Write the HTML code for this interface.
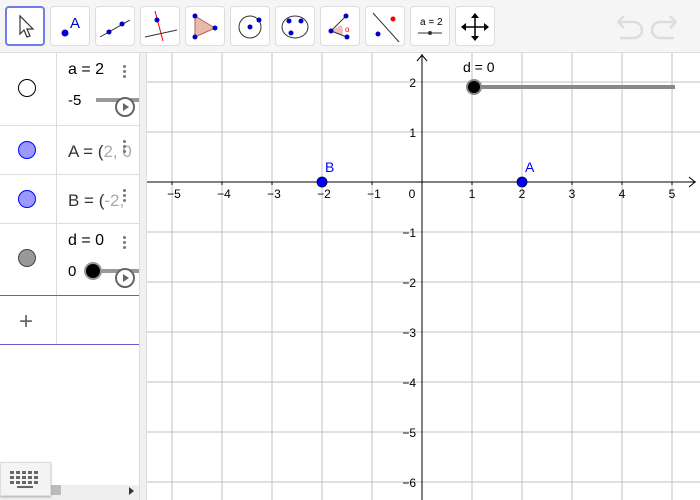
<!DOCTYPE html>
<html><head><style>
body{margin:0;width:700px;height:500px;overflow:hidden;font-family:"Liberation Sans",sans-serif;background:#fff;position:relative}
.tb{position:absolute;left:0;top:0;width:700px;height:52px;background:#f5f5f5;border-bottom:1px solid #ddd}
.btn{position:absolute;top:6px;width:38px;height:38px;border:1px solid #ddd;border-radius:4px;background:#fff}
.sel{border:2px solid #6e7cf0;width:36px;height:36px}
.alg{position:absolute;left:0;top:53px;width:139px;height:447px;background:#fff}
.div{position:absolute;left:139px;top:53px;width:8px;height:447px;background:#f0f0f0;border-left:1px solid #ddd;border-right:1px solid #ddd;box-sizing:border-box}
.row{position:absolute;left:0;width:139px;border-bottom:1px solid #ddd;box-sizing:border-box}
.row .vl{position:absolute;left:56px;top:0;bottom:0;border-left:1px solid #ddd}
.dot{position:absolute;left:18px;width:18px;height:18px;border-radius:50%;box-sizing:border-box}
.t{position:absolute;font-size:16px;color:#000;white-space:nowrap}
.menu{position:absolute;left:123px;width:3px}
.menu i{display:block;width:3px;height:3px;background:#777;border-radius:50%;margin-bottom:2px}
</style></head><body>
<div class="tb">
<div class="btn sel" style="left:5px"><svg width="36" height="36"><path d="M13 8 L13 26 L17 22 L20 29 L23 28 L20 21 L26 21 Z" fill="#fff" stroke="#333" stroke-width="1.2"/></svg></div>
<div class="btn" style="left:50px"><svg width="38" height="38"><circle cx="14" cy="26" r="3.5" fill="#00c"/><text x="19" y="21" font-size="15" fill="#00c" font-family="Liberation Sans">A</text></svg></div>
<div class="btn" style="left:95px"><svg width="38" height="38"><line x1="4" y1="30" x2="34" y2="13" stroke="#333"/><circle cx="13" cy="25" r="2.5" fill="#00c"/><circle cx="26" cy="17" r="2.5" fill="#00c"/></svg></div>
<div class="btn" style="left:140px"><svg width="38" height="38"><line x1="14" y1="4" x2="22" y2="34" stroke="#e00"/><line x1="4" y1="30" x2="36" y2="23" stroke="#333"/><circle cx="16" cy="13" r="2.5" fill="#00c"/></svg></div>
<div class="btn" style="left:185px"><svg width="38" height="38"><path d="M9 9 L29 21 L9 30 Z" fill="#e9b8a8" stroke="#a65" /><circle cx="9" cy="9" r="2.5" fill="#00c"/><circle cx="29" cy="21" r="2.5" fill="#00c"/><circle cx="9" cy="30" r="2.5" fill="#00c"/></svg></div>
<div class="btn" style="left:230px"><svg width="38" height="38"><circle cx="19" cy="20" r="11" fill="none" stroke="#333"/><circle cx="19" cy="20" r="2.5" fill="#00c"/><circle cx="28" cy="13" r="2.5" fill="#00c"/></svg></div>
<div class="btn" style="left:275px"><svg width="38" height="38"><ellipse cx="19" cy="20" rx="13" ry="11" fill="none" stroke="#333"/><circle cx="13" cy="14" r="2.5" fill="#00c"/><circle cx="25" cy="14" r="2.5" fill="#00c"/><circle cx="15" cy="26" r="2.5" fill="#00c"/></svg></div>
<div class="btn" style="left:320px"><svg width="38" height="38"><path d="M10 24 L20 18 A10 10 0 0 1 21 28 Z" fill="#f3bcbc"/><line x1="10" y1="24" x2="25" y2="9" stroke="#333"/><line x1="10" y1="24" x2="26" y2="30" stroke="#333"/><circle cx="10" cy="24" r="2.5" fill="#00c"/><circle cx="25" cy="9" r="2.5" fill="#00c"/><circle cx="26" cy="30" r="2.5" fill="#00c"/><text x="24" y="25" font-size="8" fill="#e00">o</text></svg></div>
<div class="btn" style="left:365px"><svg width="38" height="38"><line x1="7" y1="6" x2="33" y2="35" stroke="#333"/><circle cx="12" cy="27" r="2.5" fill="#00c"/><circle cx="27" cy="12" r="2.5" fill="#e00"/></svg></div>
<div class="btn" style="left:410px"><svg width="38" height="38"><text x="9" y="18" font-size="10" font-family="Liberation Sans">a = 2</text><line x1="7" y1="26" x2="31" y2="26" stroke="#333"/><circle cx="19" cy="26" r="2" fill="#333"/></svg></div>
<div class="btn" style="left:455px"><svg width="38" height="38"><path d="M19 8 V32 M7 20 H31" stroke="#000" stroke-width="1.5"/><path d="M19 6 L15 11 H23 Z M19 34 L15 29 H23 Z M5 20 L10 16 V24 Z M33 20 L28 16 V24 Z"/></svg></div>
<svg style="position:absolute;left:612px;top:12px" width="84" height="30"><path d="M6 10 H22 A8 8 0 0 1 22 26 H8 M6 10 L12 4 M6 10 L12 16" fill="none" stroke="#ddd" stroke-width="2.5"/><path d="M64 10 H48 A8 8 0 0 0 48 26 H62 M64 10 L58 4 M64 10 L58 16" fill="none" stroke="#ddd" stroke-width="2.5"/></svg>
</div>

<div class="alg">
<div class="row" style="top:0;height:73px"><div class="vl"></div><div class="dot" style="top:26px;border:1px solid #000;background:#fff"></div>
<div class="t" style="left:68px;top:8px">a = 2</div><div class="menu" style="top:12px"><i></i><i></i><i></i></div>
<div class="t" style="left:68px;top:39px;font-size:15px">-5</div>
<div style="position:absolute;left:96px;top:45px;width:43px;height:4px;background:#999"></div>
<div style="position:absolute;left:115px;top:44px;width:16px;height:16px;border:2px solid #666;border-radius:50%;background:#fff"><div style="position:absolute;left:6px;top:4px;border-left:6px solid #666;border-top:4px solid transparent;border-bottom:4px solid transparent"></div></div></div>
<div class="row" style="top:73px;height:49px"><div class="vl"></div><div class="dot" style="top:15px;border:1px solid #00f;background:#99f"></div>
<div class="t" style="left:68px;top:16px;color:#333;font-size:17px">A = (<span style="color:#aaa">2, 0</span></div><div class="menu" style="top:14px"><i></i><i></i><i></i></div></div>
<div class="row" style="top:122px;height:49px"><div class="vl"></div><div class="dot" style="top:15px;border:1px solid #00f;background:#99f"></div>
<div class="t" style="left:68px;top:16px;color:#333;font-size:17px">B = (<span style="color:#aaa">-2,</span></div><div class="menu" style="top:14px"><i></i><i></i><i></i></div></div>
<div class="row" style="top:171px;height:72px;border-bottom:1px solid #6a5acd"><div class="vl"></div><div class="dot" style="top:25px;border:1px solid #444;background:#999"></div>
<div class="t" style="left:68px;top:8px">d = 0</div><div class="menu" style="top:12px"><i></i><i></i><i></i></div>
<div class="t" style="left:68px;top:39px;font-size:15px">0</div>
<div style="position:absolute;left:96px;top:45px;width:43px;height:4px;background:#999"></div>
<div style="position:absolute;left:84px;top:38px;width:14px;height:14px;border:2px solid #999;border-radius:50%;background:#000"></div>
<div style="position:absolute;left:115px;top:44px;width:16px;height:16px;border:2px solid #666;border-radius:50%;background:#fff"><div style="position:absolute;left:6px;top:4px;border-left:6px solid #666;border-top:4px solid transparent;border-bottom:4px solid transparent"></div></div></div>
<div class="row" style="top:243px;height:49px;border-bottom:1px solid #6a5acd"><div class="vl"></div><div class="t" style="left:19px;top:12px;font-size:24px;color:#666;font-weight:300">+</div></div>
<div style="position:absolute;left:0;top:432px;width:139px;height:15px;background:#eee"></div>
<div style="position:absolute;left:15px;top:432px;width:46px;height:10px;background:#bbb"></div>
<div style="position:absolute;left:129px;top:434px;border-left:5px solid #333;border-top:4px solid transparent;border-bottom:4px solid transparent"></div>
<div style="position:absolute;left:0;top:409px;width:49px;height:32px;background:#f4f4f4;border:1px solid #ddd;box-shadow:0 1px 2px #aaa">
<svg width="49" height="32"><g fill="#666"><rect x="9" y="8" width="4" height="3"/><rect x="15" y="8" width="4" height="3"/><rect x="21" y="8" width="4" height="3"/><rect x="27" y="8" width="4" height="3"/><rect x="33" y="8" width="4" height="3"/><rect x="9" y="13" width="4" height="3"/><rect x="15" y="13" width="4" height="3"/><rect x="21" y="13" width="4" height="3"/><rect x="27" y="13" width="4" height="3"/><rect x="33" y="13" width="4" height="3"/><rect x="9" y="18" width="4" height="3"/><rect x="15" y="18" width="4" height="3"/><rect x="21" y="18" width="4" height="3"/><rect x="27" y="18" width="4" height="3"/><rect x="33" y="18" width="4" height="3"/><rect x="16" y="23" width="16" height="2"/></g></svg></div>
</div>
<div class="div"></div>

<svg style="position:absolute;left:0;top:0" width="700" height="500">
<g transform="translate(147,53)">
<g stroke="#c0c0c0" stroke-width="1">
<line x1="25" y1="0" x2="25" y2="447"/><line x1="75" y1="0" x2="75" y2="447"/><line x1="125" y1="0" x2="125" y2="447"/><line x1="175" y1="0" x2="175" y2="447"/><line x1="225" y1="0" x2="225" y2="447"/><line x1="325" y1="0" x2="325" y2="447"/><line x1="375" y1="0" x2="375" y2="447"/><line x1="425" y1="0" x2="425" y2="447"/><line x1="475" y1="0" x2="475" y2="447"/><line x1="525" y1="0" x2="525" y2="447"/>
<line x1="0" y1="29" x2="553" y2="29"/><line x1="0" y1="79" x2="553" y2="79"/><line x1="0" y1="179" x2="553" y2="179"/><line x1="0" y1="229" x2="553" y2="229"/><line x1="0" y1="279" x2="553" y2="279"/><line x1="0" y1="329" x2="553" y2="329"/><line x1="0" y1="379" x2="553" y2="379"/><line x1="0" y1="429" x2="553" y2="429"/>
</g></g>
<g stroke="#000" stroke-width="1" fill="none">
<line x1="147" y1="182" x2="696" y2="182"/><path d="M689 177 L695 182 L689 187"/>
<line x1="422" y1="54" x2="422" y2="500"/><path d="M417 61 L422 55 L427 61"/>
<g><line x1="172" y1="182" x2="172" y2="185"/><line x1="222" y1="182" x2="222" y2="185"/><line x1="272" y1="182" x2="272" y2="185"/><line x1="322" y1="182" x2="322" y2="185"/><line x1="372" y1="182" x2="372" y2="185"/><line x1="472" y1="182" x2="472" y2="185"/><line x1="522" y1="182" x2="522" y2="185"/><line x1="572" y1="182" x2="572" y2="185"/><line x1="622" y1="182" x2="622" y2="185"/><line x1="672" y1="182" x2="672" y2="185"/></g>
</g>
<g font-family="Liberation Sans" font-size="12" fill="#000" text-anchor="middle">
<text x="174" y="198">−5</text><text x="224" y="198">−4</text><text x="274" y="198">−3</text><text x="324" y="198">−2</text><text x="374" y="198">−1</text><text x="412" y="198">0</text><text x="472" y="198">1</text><text x="522" y="198">2</text><text x="572" y="198">3</text><text x="622" y="198">4</text><text x="672" y="198">5</text>
</g>
<g font-family="Liberation Sans" font-size="12" fill="#000" text-anchor="end">
<text x="416" y="87">2</text><text x="416" y="137">1</text><text x="416" y="237">−1</text><text x="416" y="287">−2</text><text x="416" y="337">−3</text><text x="416" y="387">−4</text><text x="416" y="437">−5</text><text x="416" y="487">−6</text>
</g>
<line x1="474" y1="87" x2="675" y2="87" stroke="#888" stroke-width="4"/>
<circle cx="474" cy="87" r="7" fill="#000" stroke="#888" stroke-width="2"/>
<text x="463" y="72" font-family="Liberation Sans" font-size="14">d = 0</text>
<circle cx="522" cy="182" r="5" fill="#00f" stroke="#003" stroke-width="0.8"/>
<circle cx="322" cy="182" r="5" fill="#00f" stroke="#003" stroke-width="0.8"/>
<text x="525" y="172" font-family="Liberation Sans" font-size="14" fill="#00f">A</text>
<text x="325" y="172" font-family="Liberation Sans" font-size="14" fill="#00f">B</text>
</svg>
</body></html>
